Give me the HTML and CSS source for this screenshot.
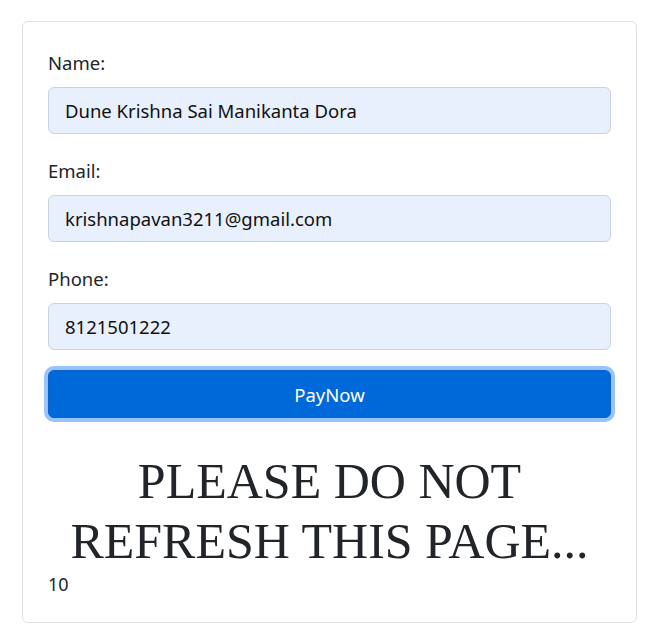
FILE: index.html
```html
<!DOCTYPE html>
<html lang="en">
<head>
<meta charset="utf-8">
<title>Payment</title>
<link rel="stylesheet" href="styles.css">
</head>
<body>
<div class="page">
  <div class="card">
    <div class="group">
      <label class="label">Name:</label>
      <div class="input">Dune Krishna Sai Manikanta Dora</div>
    </div>
    <div class="group">
      <label class="label">Email:</label>
      <div class="input">krishnapavan3211@gmail.com</div>
    </div>
    <div class="group last">
      <label class="label">Phone:</label>
      <div class="input">8121501222</div>
    </div>
    <button class="btn">PayNow</button>
    <h1 class="notice">PLEASE DO NOT REFRESH THIS PAGE...</h1>
    <div class="counter">10</div>
  </div>
</div>
</body>
</html>
```
FILE: styles.css
```css
html, body {
  margin: 0;
  padding: 0;
  background: #ffffff;
}
body {
  font-family: "Noto Sans", "Open Sans", sans-serif;
  color: #212529;
}
.page {
  padding: 21px 0 0 22px;
}
.card {
  box-sizing: border-box;
  width: 615px;
  height: 602px;
  border: 1px solid #dfe1e4;
  border-radius: 6px;
  padding: 27px 25px 24px 25px;
  display: flex;
  flex-direction: column;
}
.group {
  display: flex;
  flex-direction: column;
  margin-bottom: 23px;
}
.group.last {
  margin-bottom: 20px;
}
.label {
  font-size: 18.5px;
  line-height: 27px;
  margin-bottom: 11px;
}
.input {
  box-sizing: border-box;
  height: 47px;
  padding: 0 16px;
  display: flex;
  align-items: center;
  font-size: 18.5px;
  background: #e8f0fe;
  border: 1px solid #cdd3da;
  border-radius: 6px;
  color: #111;
}
.btn {
  box-sizing: border-box;
  height: 48px;
  width: 100%;
  border: 1px solid #0a63c9;
  border-radius: 6px;
  background: #0069d9;
  color: #ffffff;
  font-family: inherit;
  font-size: 18.5px;
  box-shadow: 0 0 0 4px #98c3fc;
  margin: 0;
  padding: 0;
}
.notice {
  margin: 33px 0 0 0;
  font-family: "Liberation Serif", "Times New Roman", serif;
  font-weight: normal;
  font-size: 50px;
  line-height: 60px;
  text-align: center;
  color: #212529;
}
.counter {
  font-size: 18px;
  line-height: 27px;
}
```
